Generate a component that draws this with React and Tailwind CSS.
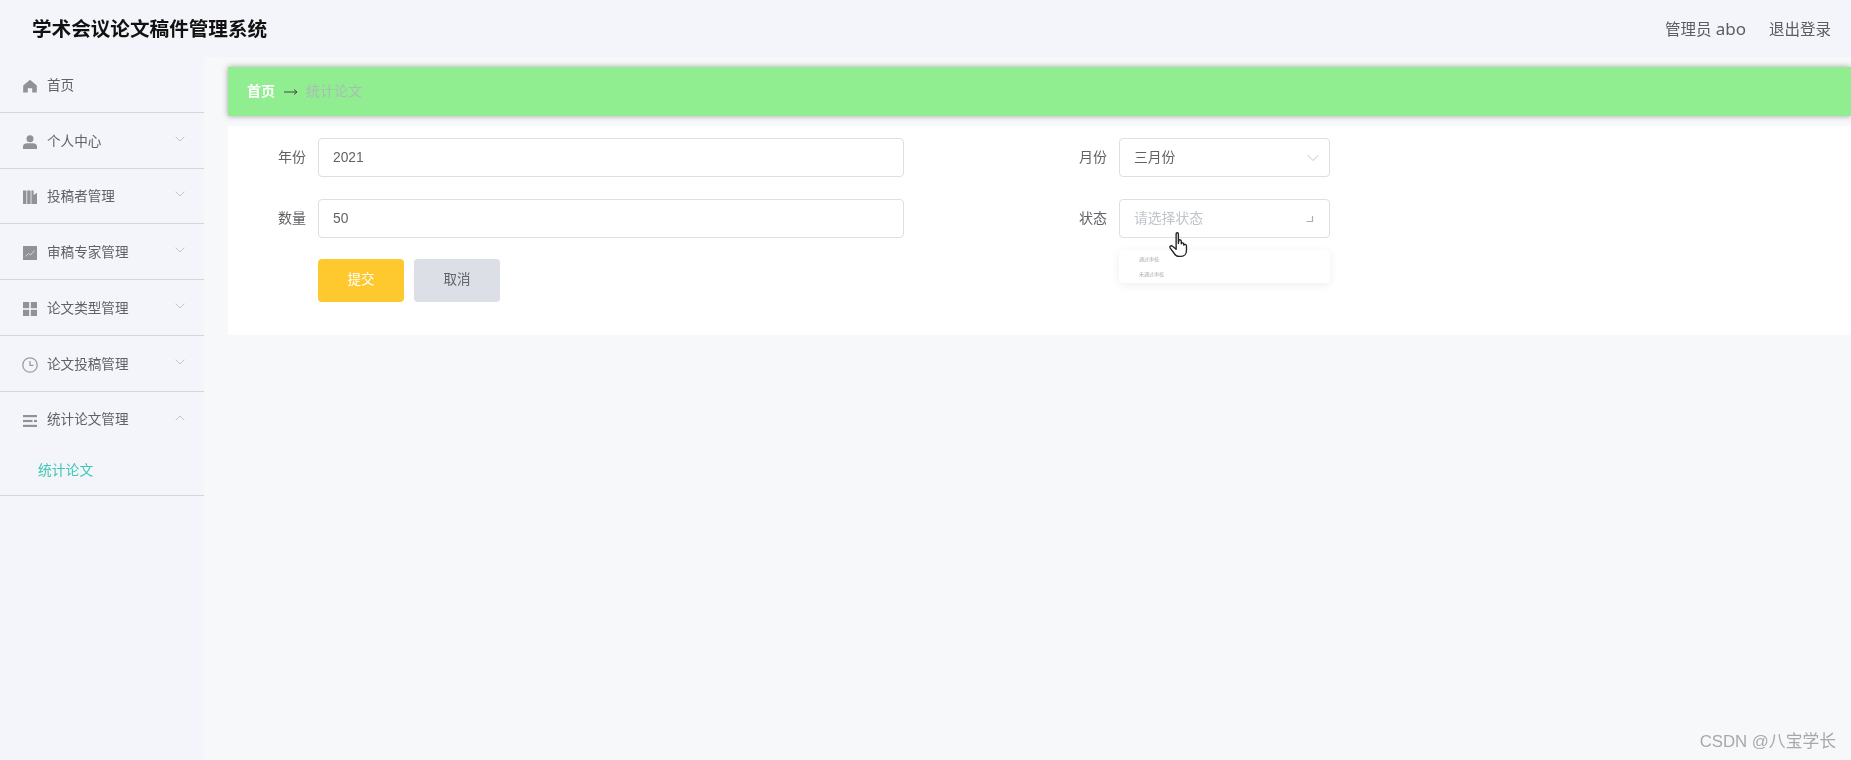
import { ChevronDown, ChevronUp } from 'lucide-react';

const font = "font-['Liberation_Sans','Noto_Sans_CJK_SC',sans-serif]";

const HomeIcon = () => (
    <svg viewBox="0 0 14 14" className="w-[14px] h-[14px]" fill="#8f9296">
        <path d="M7 .8 13.8 6.6V13.4H9.2V9.2H4.8V13.4H.2V6.6Z" />
    </svg>
);

const UserIcon = () => (
    <svg viewBox="0 0 14 14" className="w-[14px] h-[14px]" fill="#8f9296">
        <circle cx="7" cy="3.8" r="3.5" />
        <path d="M0 14V11.6C0 9.4 2 8.3 4.2 8.3H9.8C12 8.3 14 9.4 14 11.6V14Z" />
    </svg>
);

const BooksIcon = () => (
    <svg viewBox="0 0 14 14" className="w-[14px] h-[14px]" fill="#8f9296">
        <path d="M0 .5H3.4V14H0ZM4.2 .5H7.6V14H4.2ZM8.4 .5H10.6V5L14 2.8V14H8.4Z" />
    </svg>
);

const ChartIcon = () => (
    <svg viewBox="0 0 14 14" className="w-[14px] h-[14px]">
        <rect width="14" height="14" fill="#8f9296" />
        <path d="M2.5 10.5 5.5 7.5 7.5 9 11.5 4.5" fill="none" stroke="#d3d5d9" strokeWidth="1" />
    </svg>
);

const GridIcon = () => (
    <svg viewBox="0 0 14 14" className="w-[14px] h-[14px]" fill="#8f9296">
        <rect width="6.2" height="6.2" />
        <rect x="7.8" width="6.2" height="6.2" />
        <rect y="7.8" width="6.2" height="6.2" />
        <rect x="7.8" y="7.8" width="6.2" height="6.2" />
    </svg>
);

const ClockIcon = () => (
    <svg viewBox="0 0 16 16" className="w-[16px] h-[16px] shrink-0" fill="none" stroke="#9a9da1" strokeWidth="1.3">
        <circle cx="8" cy="8" r="7.2" />
        <path d="M8 4V8.4H11.6" />
    </svg>
);

const OperationIcon = () => (
    <svg viewBox="0 0 14 12" className="w-[14px] h-[12px]" fill="#8f9296">
        <rect width="14" height="2.2" />
        <rect y="4.9" width="9.5" height="2.2" />
        <rect x="11" y="4.9" width="3" height="2.2" />
        <rect y="9.8" width="14" height="2.2" />
    </svg>
);

const menus = [
    { title: '首页', icon: <HomeIcon /> },
    { title: '个人中心', icon: <UserIcon />, arrow: true },
    { title: '投稿者管理', icon: <BooksIcon />, arrow: true },
    { title: '审稿专家管理', icon: <ChartIcon />, arrow: true },
    { title: '论文类型管理', icon: <GridIcon />, arrow: true },
    { title: '论文投稿管理', icon: <ClockIcon />, arrow: true },
];

function MenuRow({ title, icon, arrow, open }) {
    return (
        <div className="h-[54.8px] flex items-center pl-[23px] pr-[16px] pt-[3px] text-[13.6px] text-[#606266]">
            <span className="w-[14px] flex justify-center mr-[10px]">{icon}</span>
            <span className="flex-1">{title}</span>
            {arrow && (open
                ? <ChevronUp className="w-[16px] h-[16px] text-[#a8abb2] -mt-[6px]" strokeWidth={1} />
                : <ChevronDown className="w-[16px] h-[16px] text-[#a8abb2] -mt-[6px]" strokeWidth={1} />)}
        </div>
    );
}

function Sidebar() {
    return (
        <aside className="w-[204px] shrink-0">
            {menus.map((menu) => (
                <div key={menu.title} className="border-b border-[#d5d6da]">
                    <MenuRow {...menu} />
                </div>
            ))}
            <div className="border-b border-[#d5d6da]">
                <MenuRow title="统计论文管理" icon={<OperationIcon />} arrow open />
                <div className="h-[48px] pl-[38px] pt-[2px] flex items-center text-[13.8px] text-[#3fc7b4]">统计论文</div>
            </div>
        </aside>
    );
}

function Field({ label, children }) {
    return (
        <div className="flex items-center">
            <label className="w-[90px] pr-3 text-right text-[14px] text-[#606266]">{label}</label>
            {children}
        </div>
    );
}

const boxClass = 'h-[39px] rounded border border-[#dcdfe6] bg-white pl-[14px] pr-[15px] pt-px flex items-center text-[13.8px]';

function Form() {
    return (
        <div className="bg-white h-[209px] pt-[12px]">
            <div className="flex">
                <Field label="年份">
                    <div className={`${boxClass} w-[586px] text-[#606266]`}>2021</div>
                </Field>
                <div className="ml-[125px]">
                    <Field label="月份">
                        <div className={`${boxClass} w-[211px] text-[#606266] justify-between`}>
                            三月份
                            <ChevronDown className="w-[20px] h-[20px] text-[#b4b7bd] -mr-[9px]" strokeWidth={1} />
                        </div>
                    </Field>
                </div>
            </div>
            <div className="flex mt-[22px]">
                <Field label="数量">
                    <div className={`${boxClass} w-[586px] text-[#606266]`}>50</div>
                </Field>
                <div className="ml-[125px] relative">
                    <Field label="状态">
                        <div className={`${boxClass} w-[211px] text-[#c0c4cc] justify-between`}>
                            请选择状态
                            <svg viewBox="0 0 8 8" className="w-[8px] h-[8px]" fill="none" stroke="#a9adb5" strokeWidth="1.2">
                                <path d="M.5 6.5H6.5V1" />
                            </svg>
                        </div>
                    </Field>
                    {/* dropdown caught halfway through its opening animation */}
                    <div className="absolute left-[90px] top-[51px] w-[211px] h-[33px] bg-white rounded-sm shadow-[0_2px_10px_rgba(0,0,0,0.07)] pl-[20px] pt-[2px] text-[5px] leading-[15px] text-[#a8abb0]">
                        <div>通过审核</div>
                        <div>未通过审核</div>
                    </div>
                    <svg viewBox="0 0 24 24" className="absolute left-[137px] top-[32px] w-[27px] h-[27px] z-10" fill="#fff" stroke="#222" strokeWidth="1.2" strokeLinejoin="round">
                        <path d="M9 2.5C9 1.2 11 1.2 11 2.5V11L11.4 8.6C11.6 7.4 13.6 7.6 13.6 9V11.4C13.8 10.2 15.8 10.4 15.8 11.8V12.6C16.2 11.4 18.2 11.8 18.2 13.2V17C18.2 20 16.4 22.5 13.4 22.5H11.4C9.4 22.5 8.2 21.4 7.2 19.8L3.6 15C2.8 13.8 4.6 12.4 5.8 13.6L9 16.2Z" />
                    </svg>
                </div>
            </div>
            <div className="flex gap-[10px] mt-[21px] ml-[90px]">
                <button className="w-[86px] h-[43px] rounded bg-[#fdc92f] text-white text-[13.5px]">提交</button>
                <button className="w-[86px] h-[43px] rounded bg-[#dcdfe6] text-[#606266] text-[13.5px]">取消</button>
            </div>
        </div>
    );
}

export default function App() {
    return (
        <div className={`${font} relative h-[760px] overflow-hidden bg-[#f4f5fa] blur-[0.4px]`}>
            <header className="h-[60px] flex items-center justify-between pl-[32px] pr-[20px]">
                <h1 className="text-[19.6px] font-bold text-[#111]">学术会议论文稿件管理系统</h1>
                <div className="flex gap-[23px] items-center leading-[24px] text-[15.5px] text-[#5a5d62]">
                    <span className="-mt-px">管理员 <span className="font-['Noto_Sans'] text-[17px] leading-none">abo</span></span>
                    <span>退出登录</span>
                </div>
            </header>
            <div className="flex h-[703px] -mt-[3px]">
                <Sidebar />
                <main className="flex-1 bg-[#f7f8fa] pl-[24px] pt-[10px]">
                    <div className="h-[49px] bg-[#90ee90] shadow-[0_0_6px_rgba(0,0,0,0.35)] flex items-center pl-[19px] text-[14px]">
                        <span className="font-bold text-white">首页</span>
                        <svg viewBox="0 0 14 8" className="w-[14px] h-[8px] ml-[9px] mr-[8px]" fill="none" stroke="#3c4a40" strokeWidth="1">
                            <path d="M0 4H13M10 1.5 13 4 10 6.5" />
                        </svg>
                        <span className="text-[#a9bdb5]">统计论文</span>
                    </div>
                    <div className="mt-[10px]">
                        <Form />
                    </div>
                </main>
            </div>
            <div className="absolute right-[15px] bottom-[6px] text-[16.8px] text-[#a8a8a8]">CSDN @八宝学长</div>
        </div>
    );
}
